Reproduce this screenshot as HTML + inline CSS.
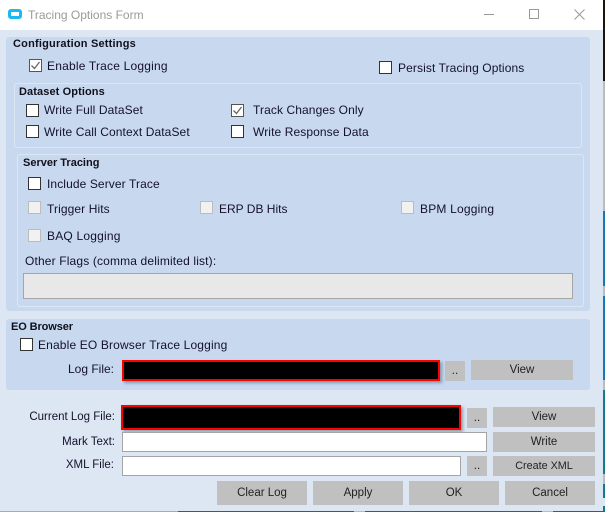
<!DOCTYPE html>
<html><head><meta charset="utf-8">
<style>
html,body{margin:0;padding:0;background:#fff}
#w{position:relative;width:605px;height:512px;overflow:hidden;background:#dde7f4;font-family:"Liberation Sans",sans-serif;font-size:12px;color:#1a1030}
#w div,#w span{position:absolute;box-sizing:border-box}
.t{white-space:nowrap;line-height:14px;height:14px;color:#14102a;letter-spacing:.1px}
.b{font-weight:bold;font-size:11px;color:#10101c;letter-spacing:0}
.r{text-align:right;letter-spacing:0}
.s{font-size:11.5px}
.p{background:#c8d9ef;border-radius:3px}
.g{border:1px solid #dde7f4;border-radius:3px}
.c{width:13px;height:13px;background:#fff;border:1px solid #333}
.c.k{border-color:#555}
.c.d{background:#f1f1f1;border-color:#bcbcbc}
.btn{background:#c0c0c0;text-align:center;color:#222;line-height:20px;font-size:11.5px}
.red{background:#000;border:2px solid #f00;box-shadow:2px 2px 3px rgba(70,80,100,.5)}
.in{background:#fff;border:1px solid #a5a5a5}
</style></head><body>
<div id="w">
<div style="left:0;top:0;width:605px;height:30px;background:#fff"></div>
<div style="left:8px;top:9px;width:14px;height:10px;background:#1cb9ee;border-radius:3px"></div>
<div style="left:11px;top:12px;width:8px;height:4px;background:#fff"></div>
<div class="t" style="left:28px;top:8px;font-size:12px;color:#9a9a9a;letter-spacing:0">Tracing Options Form</div>
<div style="left:484px;top:14px;width:10px;height:1px;background:#999"></div>
<div style="left:529px;top:9px;width:10px;height:10px;border:1px solid #999"></div>
<svg style="position:absolute;left:574px;top:9px" width="11" height="11"><path d="M.5.5L10.5 10.5M10.5.5L.5 10.5" stroke="#999" fill="none"/></svg>

<div class="p" style="left:6px;top:37px;width:584px;height:274px"></div>
<div class="t b" style="left:13px;top:37px;letter-spacing:.2px">Configuration Settings</div>
<div class="c k" style="left:29px;top:59px"><svg style="position:absolute;left:0;top:0" width="11" height="11"><path d="M1.5 5.5L4.5 8.5L9.5 2" stroke="#666" stroke-width="1.3" fill="none"/></svg></div>
<div class="t" style="left:47px;top:59px;letter-spacing:.2px">Enable Trace Logging</div>
<div class="c" style="left:379px;top:61px"></div>
<div class="t" style="left:398px;top:61px">Persist Tracing Options</div>

<div class="g" style="left:14px;top:83px;width:568px;height:65px"></div>
<div class="t b" style="left:19px;top:85px;letter-spacing:.1px">Dataset Options</div>
<div class="c" style="left:26px;top:104px"></div>
<div class="t" style="left:44px;top:103px">Write Full DataSet</div>
<div class="c" style="left:26px;top:125px"></div>
<div class="t" style="left:44px;top:125px">Write Call Context DataSet</div>
<div class="c k" style="left:231px;top:104px"><svg style="position:absolute;left:0;top:0" width="11" height="11"><path d="M1.5 5.5L4.5 8.5L9.5 2" stroke="#666" stroke-width="1.3" fill="none"/></svg></div>
<div class="t" style="left:253px;top:103px">Track Changes Only</div>
<div class="c" style="left:231px;top:125px"></div>
<div class="t" style="left:253px;top:125px">Write Response Data</div>

<div class="g" style="left:17px;top:154px;width:567px;height:153px"></div>
<div class="t b" style="left:23px;top:156px">Server Tracing</div>
<div class="c" style="left:28px;top:177px"></div>
<div class="t" style="left:47px;top:177px">Include Server Trace</div>
<div class="c d" style="left:28px;top:201px"></div>
<div class="t" style="left:47px;top:202px">Trigger Hits</div>
<div class="c d" style="left:200px;top:201px"></div>
<div class="t" style="left:219px;top:202px;letter-spacing:0">ERP DB Hits</div>
<div class="c d" style="left:401px;top:201px"></div>
<div class="t" style="left:420px;top:202px;letter-spacing:.2px">BPM Logging</div>
<div class="c d" style="left:28px;top:229px"></div>
<div class="t" style="left:47px;top:229px;letter-spacing:.2px">BAQ Logging</div>
<div class="t" style="left:25px;top:254px;letter-spacing:.15px">Other Flags (comma delimited list):</div>
<div style="left:23px;top:273px;width:550px;height:26px;background:#e8e8e8;border:1px solid #a5a5a5"></div>

<div class="p" style="left:6px;top:319px;width:584px;height:71px"></div>
<div class="t b" style="left:11px;top:320px;letter-spacing:-.1px">EO Browser</div>
<div class="c" style="left:20px;top:338px"></div>
<div class="t" style="left:38px;top:338px;letter-spacing:.15px">Enable EO Browser Trace Logging</div>
<div class="t r" style="left:14px;top:362px;width:100px">Log File:</div>
<div class="red" style="left:122px;top:360px;width:318px;height:21px"></div>
<div class="btn" style="left:445px;top:361px;width:20px;height:20px">..</div>
<div class="btn" style="left:471px;top:360px;width:102px;height:20px">View</div>

<div class="t r s" style="left:15px;top:410px;width:100px">Current Log File:</div>
<div class="red" style="left:121px;top:405px;width:340px;height:25px"></div>
<div class="btn" style="left:467px;top:408px;width:20px;height:20px">..</div>
<div class="btn" style="left:493px;top:407px;width:102px;height:20px">View</div>
<div class="t r s" style="left:15px;top:435px;width:100px">Mark Text:</div>
<div class="in" style="left:122px;top:432px;width:365px;height:20px"></div>
<div class="btn" style="left:493px;top:432px;width:102px;height:20px">Write</div>
<div class="t r s" style="left:14px;top:458px;width:100px">XML File:</div>
<div class="in" style="left:122px;top:456px;width:339px;height:20px"></div>
<div class="btn" style="left:467px;top:456px;width:20px;height:20px">..</div>
<div class="btn" style="left:493px;top:456px;width:102px;height:20px;font-size:10.8px">Create XML</div>
<div class="btn" style="left:217px;top:481px;width:90px;height:24px;line-height:24px">Clear Log</div>
<div class="btn" style="left:313px;top:481px;width:90px;height:24px;line-height:24px">Apply</div>
<div class="btn" style="left:409px;top:481px;width:90px;height:24px;line-height:24px">OK</div>
<div class="btn" style="left:505px;top:481px;width:90px;height:24px;line-height:24px">Cancel</div>

<div style="left:603px;top:0;width:2px;height:81px;background:#1c130c"></div>
<div style="left:603px;top:81px;width:2px;height:130px;background:#bbb"></div>
<div style="left:603px;top:211px;width:2px;height:75px;background:#1478b4"></div>
<div style="left:603px;top:286px;width:2px;height:10px;background:#bbb"></div>
<div style="left:603px;top:296px;width:2px;height:84px;background:#1478b4"></div>
<div style="left:603px;top:380px;width:2px;height:10px;background:#bbb"></div>
<div style="left:603px;top:390px;width:2px;height:84px;background:#147a8c"></div>
<div style="left:603px;top:474px;width:2px;height:10px;background:#bbb"></div>
<div style="left:603px;top:484px;width:2px;height:14px;background:#147a8c"></div>
<div style="left:603px;top:498px;width:2px;height:8px;background:#dde7f4"></div>
<div style="left:603px;top:506px;width:2px;height:6px;background:#147a8c"></div>
<div style="left:0;top:511px;width:178px;height:1px;background:#aaa"></div>
<div style="left:178px;top:511px;width:427px;height:1px;background:#1a6a78"></div>
<div style="left:354px;top:511px;width:11px;height:1px;background:#bbb"></div>
<div style="left:542px;top:511px;width:11px;height:1px;background:#bbb"></div>
</div>
</body></html>
